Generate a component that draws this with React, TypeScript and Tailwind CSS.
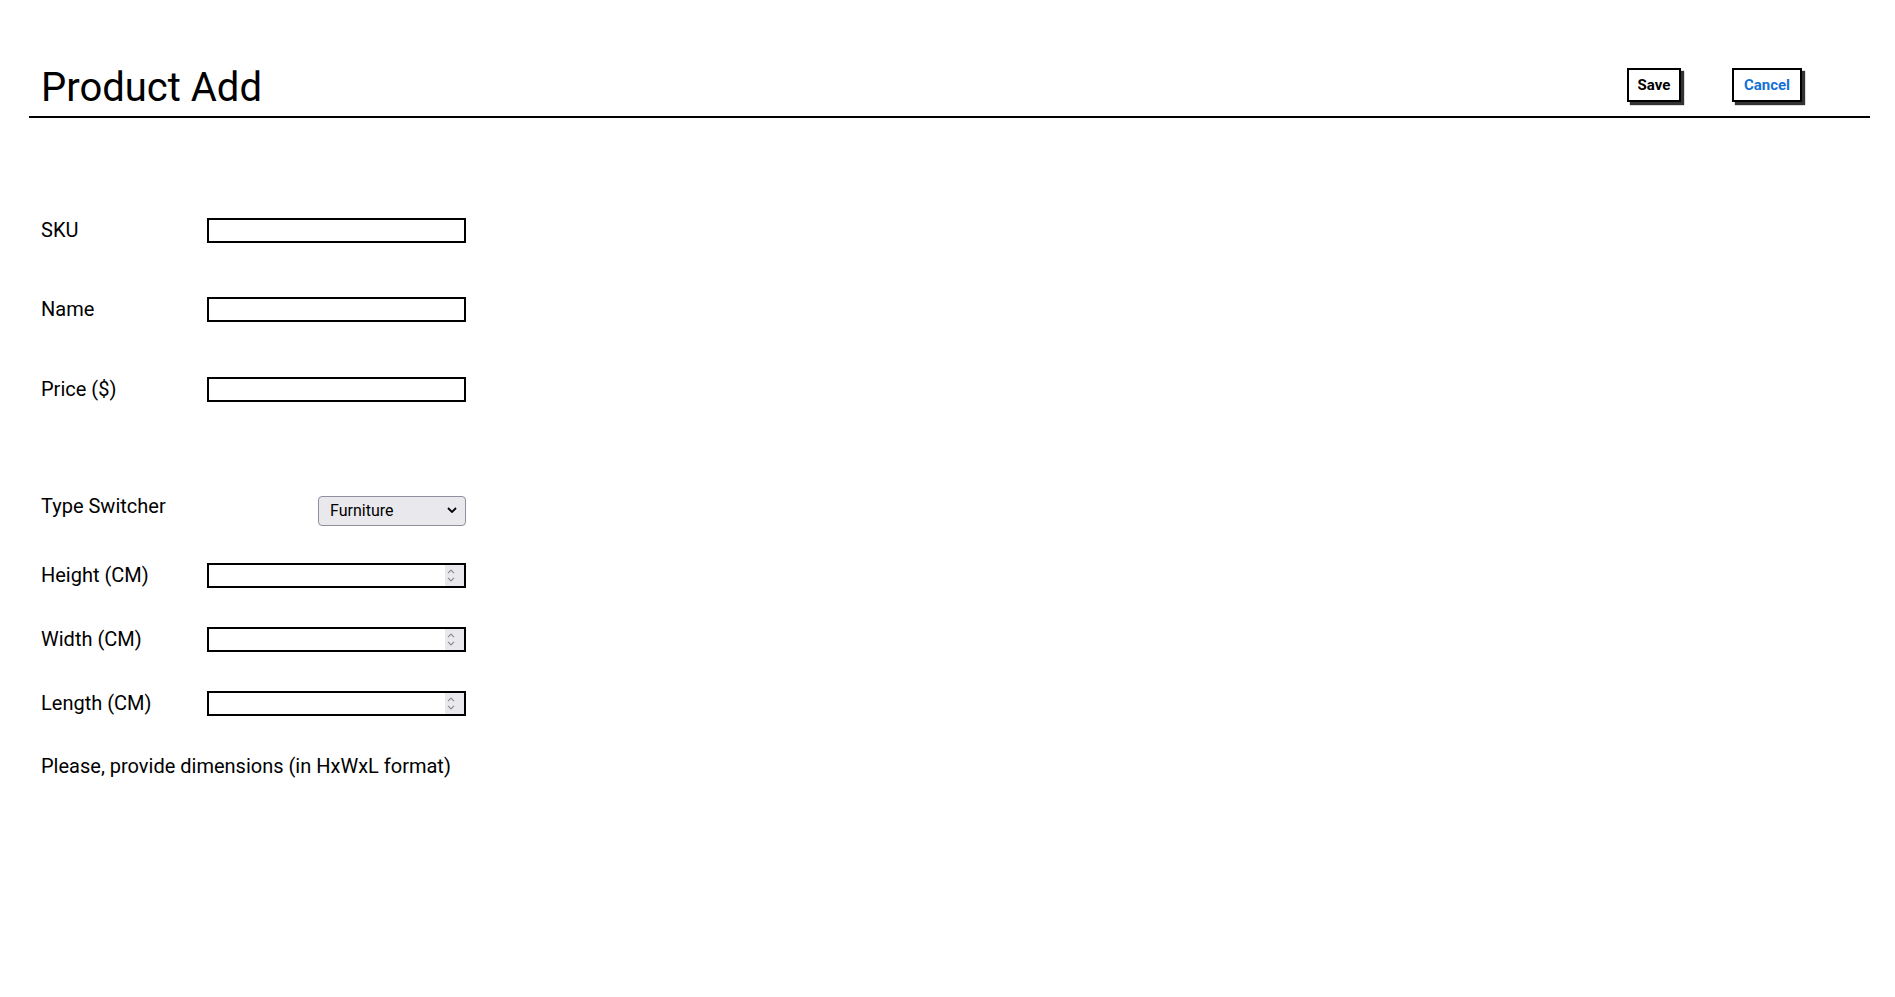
function Spinner() {
    return (
        <span className="flex flex-col items-start justify-center gap-[3px] w-[19px] pl-[2px] bg-[#e9e9ed]">
            <svg width="8" height="5" viewBox="0 0 8 5" fill="none">
                <path d="M1 4.2L4 1.2l3 3" stroke="#8a8a8a" strokeWidth="1.2" />
            </svg>
            <svg width="8" height="5" viewBox="0 0 8 5" fill="none">
                <path d="M1 0.8l3 3 3-3" stroke="#8a8a8a" strokeWidth="1.2" />
            </svg>
        </span>
    );
}

function TextRow({ id, label, className = "" }: { id: string; label: string; className?: string }) {
    return (
        <div className={`flex items-center justify-between w-[425px] h-[25px] ${className}`}>
            <label htmlFor={id} className="leading-[25px]">{label}</label>
            <input id={id} type="text" className="w-[259px] h-[25px] border-2 border-black bg-white" />
        </div>
    );
}

function NumberRow({ id, label }: { id: string; label: string }) {
    return (
        <div className="flex items-center justify-between w-[425px] h-[25px] mt-[39px]">
            <label htmlFor={id} className="leading-[25px]">{label}</label>
            <div className="flex w-[259px] h-[25px] border-2 border-black bg-white">
                <input
                    id={id}
                    type="number"
                    className="flex-1 min-w-0 appearance-[textfield] [&::-webkit-inner-spin-button]:appearance-none [&::-webkit-outer-spin-button]:appearance-none"
                />
                <Spinner />
            </div>
        </div>
    );
}

export default function App() {
    return (
        <div className="min-h-screen bg-white text-black font-['Roboto',sans-serif] pt-[54px] pl-[29px] pr-[25px]">

            {/* Header */}
            <header className="flex items-center justify-between h-[64px] border-b-2 border-black pl-[12px] pr-[68px]">
                <h1 className="text-[40px] leading-none font-normal mt-[5px]">Product Add</h1>
                <div className="flex items-center gap-[51px]">
                    <button
                        type="button"
                        className="flex items-center justify-center w-[54px] h-[34px] border-2 border-black bg-white text-[15px] leading-[17px] font-bold text-black shadow-[3px_3px_1px_#333]"
                    >
                        Save
                    </button>
                    <button
                        type="button"
                        className="flex items-center justify-center w-[70px] h-[34px] border-2 border-black bg-white text-[15px] leading-[17px] font-bold text-[#1570d6] shadow-[3px_3px_1px_#333]"
                    >
                        Cancel
                    </button>
                </div>
            </header>

            {/* Form */}
            <form id="product_form" className="pl-[12px] pt-[100px] text-[20px]">
                <TextRow id="sku" label="SKU" />
                <TextRow id="name" label="Name" className="mt-[54px]" />
                <TextRow id="price" label="Price ($)" className="mt-[55px]" />

                {/* Type switcher */}
                <div className="flex items-start justify-between w-[425px] h-[30px] mt-[92px]">
                    <label htmlFor="productType" className="leading-[23px] mt-[1px]">Type Switcher</label>
                    <div className="relative">
                        <select
                            id="productType"
                            defaultValue="Furniture"
                            className="appearance-none w-[148px] h-[30px] rounded-[4px] border border-[#8f8f9d] bg-[#e9e9ed] pl-[11px] text-[16px] leading-[20px] text-black"
                        >
                            <option>DVD</option>
                            <option>Book</option>
                            <option>Furniture</option>
                        </select>
                        <svg
                            className="pointer-events-none absolute right-[9px] top-[13px]"
                            width="10"
                            height="6"
                            viewBox="0 0 10 6"
                            fill="none"
                        >
                            <path d="M1 1l4 4 4-4" stroke="#000" strokeWidth="1.8" />
                        </svg>
                    </div>
                </div>

                {/* Dimensions */}
                <NumberRow id="height" label="Height (CM)" />
                <NumberRow id="width" label="Width (CM)" />
                <NumberRow id="length" label="Length (CM)" />

                <p className="mt-[39px] leading-[23px]">Please, provide dimensions (in HxWxL format)</p>
            </form>
        </div>
    );
}
